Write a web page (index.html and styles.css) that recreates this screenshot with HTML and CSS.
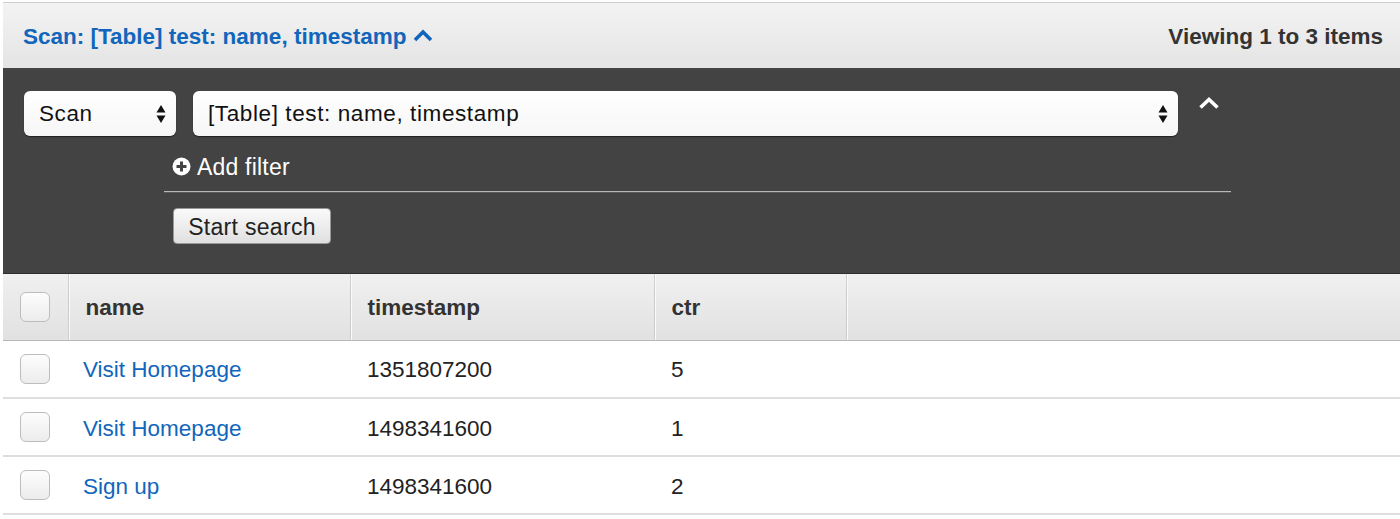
FILE: index.html
```html
<!DOCTYPE html>
<html>
<head>
<meta charset="utf-8">
<link rel="stylesheet" href="styles.css">
</head>
<body>
<div class="page">
  <div class="titlebar">
    <a class="title" href="#">Scan: [Table] test: name, timestamp
      <svg class="chev" width="20" height="13" viewBox="0 0 20 13"><path d="M2 11 L10 3 L18 11" fill="none" stroke="#1166bb" stroke-width="3.6"/></svg>
    </a>
    <div class="count">Viewing 1 to 3 items</div>
  </div>
  <div class="panel">
    <div class="selects">
      <div class="select s1"><span>Scan</span>
        <svg class="updown" width="10" height="20" viewBox="0 0 10 20"><path d="M5 1 L9.5 8.5 L0.5 8.5 Z M5 19 L9.5 11.5 L0.5 11.5 Z" fill="#111"/></svg>
      </div>
      <div class="select s2"><span>[Table] test: name, timestamp</span>
        <svg class="updown" width="10" height="20" viewBox="0 0 10 20"><path d="M5 1 L9.5 8.5 L0.5 8.5 Z M5 19 L9.5 11.5 L0.5 11.5 Z" fill="#111"/></svg>
      </div>
      <svg class="collapse" width="22" height="14" viewBox="0 0 22 14"><path d="M2.5 11.5 L11 3.5 L19.5 11.5" fill="none" stroke="#fff" stroke-width="3.6"/></svg>
    </div>
    <div class="filters">
      <div class="addfilter">
        <svg width="19" height="19" viewBox="0 0 19 19"><circle cx="9.5" cy="9.5" r="9" fill="#fff"/><path d="M9.5 4.5 V14.5 M4.5 9.5 H14.5" stroke="#444" stroke-width="3"/></svg>
        <span>Add filter</span>
      </div>
      <div class="rule"></div>
      <button class="btn">Start search</button>
    </div>
  </div>
  <table class="grid">
    <colgroup>
      <col class="c0"><col class="c1"><col class="c2"><col class="c3"><col>
    </colgroup>
    <thead>
      <tr>
        <th class="cb first"><span class="box"></span></th>
        <th>name</th>
        <th>timestamp</th>
        <th>ctr</th>
        <th class="last"></th>
      </tr>
    </thead>
    <tbody>
      <tr>
        <td class="cb"><span class="box"></span></td>
        <td class="nm"><a href="#">Visit Homepage</a></td>
        <td>1351807200</td>
        <td>5</td>
        <td></td>
      </tr>
      <tr>
        <td class="cb"><span class="box"></span></td>
        <td class="nm"><a href="#">Visit Homepage</a></td>
        <td>1498341600</td>
        <td>1</td>
        <td></td>
      </tr>
      <tr>
        <td class="cb"><span class="box"></span></td>
        <td class="nm"><a href="#">Sign up</a></td>
        <td>1498341600</td>
        <td>2</td>
        <td></td>
      </tr>
    </tbody>
  </table>
</div>
</body>
</html>
```
FILE: styles.css
```css
* { box-sizing: border-box; }
html, body { margin: 0; padding: 0; background: #fff; }
body {
  font-family: "Liberation Sans", Arial, Helvetica, sans-serif;
  font-size: 22.5px;
  color: #222;
}
.page {
  margin: 2px 0 0 3px;
  border-top: 1px solid #cfcfcf;
}
.titlebar {
  height: 65px;
  display: flex;
  align-items: center;
  justify-content: space-between;
  padding: 2px 17px 0 20px;
  background: linear-gradient(#f3f3f3, #e4e4e4);
}
.title {
  color: #1166bb;
  font-weight: bold;
  text-decoration: none;
  display: flex;
  align-items: center;
  gap: 7px;
}
.chev { margin-top: -3px; }
.count {
  font-weight: bold;
  color: #333;
}
.panel {
  background: #434343;
  height: 206px;
  padding: 23px 0 0 21px;
  border-bottom: 1px solid #2e2e2e;
}
.selects {
  display: flex;
  align-items: center;
}
.select {
  height: 45px;
  background: linear-gradient(#ffffff, #f6f6f6);
  border-radius: 6px;
  box-shadow: 0 1px 1px rgba(0,0,0,0.5);
  display: flex;
  align-items: center;
  justify-content: space-between;
  padding: 1px 10px 0 15px;
  color: #111;
  letter-spacing: 0.6px;
}
.s1 { width: 152px; }
.s2 { width: 985px; margin-left: 17px; }
.collapse { margin-left: 20px; margin-top: -22px; }
.filters {
  margin-left: 140px;
  width: 1067px;
}
.addfilter {
  height: 30px;
  margin-top: 15px;
  padding: 2px 0 0 8px;
  display: flex;
  align-items: center;
  gap: 6px;
  color: #fff;
  font-size: 23px;
  letter-spacing: 0.2px;
}
.addfilter svg { margin-top: -1px; }
.rule {
  margin-top: 10px;
  height: 2px;
  background: #b8b8b8;
  border-bottom: 1px solid #5a5a5a;
}
.btn {
  margin: 15px 0 0 9px;
  height: 36px;
  width: 158px;
  font: inherit;
  font-size: 23px;
  letter-spacing: 0.3px;
  color: #222;
  background: linear-gradient(#fafafa, #e0e0e0);
  border: 1px solid #999;
  border-radius: 4px;
  padding: 2px 0 0;
}
.grid {
  width: 100%;
  border-collapse: collapse;
  table-layout: fixed;
}
.c0 { width: 65px; }
.c1 { width: 282px; }
.c2 { width: 304px; }
.c3 { width: 192px; }
.grid th {
  height: 66px;
  text-align: left;
  font-weight: bold;
  color: #333;
  padding: 3px 0 0 17px;
  background: linear-gradient(#f0f0f0, #e1e1e1);
  border-bottom: 1px solid #b9b9b9;
  border-right: 1px solid #cdcdcd;
  box-shadow: inset 1px 0 0 #fafafa;
}
.grid th.first { box-shadow: none; }
.grid th.last { border-right: none; }
.grid td {
  height: 58px;
  padding: 3px 0 0 17px;
  border-bottom: 2px solid #dedede;
  color: #222;
}
.grid td.nm { padding-left: 15px; }
.grid td a { color: #1166bb; text-decoration: none; }
.grid .cb { padding: 0 0 0 17px; }
.box {
  display: block;
  width: 30px;
  height: 30px;
  border: 1px solid #bdbdbd;
  border-radius: 6px;
  background: linear-gradient(#fdfdfd, #ececec);
}
```
